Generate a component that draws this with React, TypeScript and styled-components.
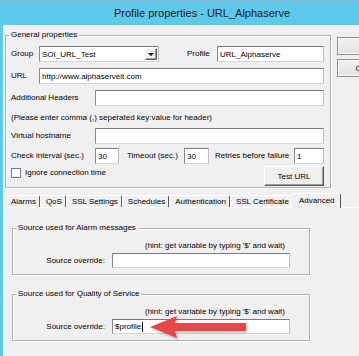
import React from "react";
import styled, { createGlobalStyle } from "styled-components";

const GlobalStyle = createGlobalStyle`
  html, body {
    margin: 0;
    padding: 0;
    background: #f0f0f0;
  }
  body {
    font-family: "Liberation Sans", Arial, sans-serif;
    font-size: 8px;
    color: #000;
  }
`;

const Window = styled.div`
  width: 359px;
  height: 356px;
  overflow: hidden;
  display: flex;
  flex-direction: column;
  background: #f0f0f0;
`;

const TitleBar = styled.div`
  flex: 0 0 auto;
  height: 25px;
  box-sizing: border-box;
  background: #5fc9ec;
  border-top: 1px solid #8fb8c8;
  padding-left: 114px;
  display: flex;
  align-items: center;
  font-size: 11px;
  color: #1b1b1b;
  white-space: nowrap;
`;

const Body = styled.div`
  flex: 1;
  border-left: 3px solid #5fc9ec;
  padding: 5px 0 0 2px;
  display: flex;
  flex-direction: column;
  min-height: 0;
`;

const TopRow = styled.div`
  display: flex;
  align-items: flex-start;
`;

const GroupBox = styled.fieldset<{ $w: number }>`
  margin: 0;
  flex: 0 0 auto;
  width: ${(p) => p.$w}px;
  box-sizing: border-box;
  min-width: 0;
  border: 1px solid #b2b2b2;
  box-shadow: inset 1px 1px 0 #fff, 1px 1px 0 #fff;
  padding: 0 6px 1px 5px;
  display: flex;
  flex-direction: column;

  & + & {
    margin-top: 14px;
  }
`;

const PanelGroup = styled(GroupBox)`
  padding: 0 19px 6px 5px;
`;

const Legend = styled.legend`
  padding: 0 2px;
  margin-left: -2px;
  line-height: 10px;
  background: #f0f0f0;
`;

const Row = styled.div<{ $mt?: number; $h?: number }>`
  display: flex;
  align-items: center;
  margin-top: ${(p) => p.$mt ?? 0}px;
  height: ${(p) => p.$h ?? 16}px;
`;

const Label = styled.span<{ $w?: number; $ml?: number }>`
  flex: 0 0 ${(p) => (p.$w ? `${p.$w}px` : "auto")};
  margin-left: ${(p) => p.$ml ?? 0}px;
  white-space: nowrap;
  line-height: 10px;
`;

const Note = styled.div<{ $mt?: number }>`
  margin-top: ${(p) => p.$mt ?? 0}px;
  line-height: 10px;
  white-space: nowrap;
`;

const TextBox = styled.div<{ $w?: number; $h?: number }>`
  box-sizing: border-box;
  ${(p) => (p.$w ? `flex: 0 0 ${p.$w}px;` : "flex: 1; min-width: 0;")}
  height: ${(p) => p.$h ?? 16}px;
  background: #fff;
  border: 1px solid;
  border-color: #7a7a7a #bdbdbd #d4d4d4 #8a8a8a;
  padding: 0 2px;
  display: flex;
  align-items: center;
  white-space: nowrap;
  position: relative;
`;

const Caret = styled.span`
  display: inline-block;
  width: 1px;
  height: 10px;
  background: #000;
  margin-left: 1px;
`;

const SelectBox = styled(TextBox)`
  padding-right: 1px;
  justify-content: space-between;
`;

const DropButton = styled.span`
  width: 12px;
  height: 12px;
  box-sizing: border-box;
  background: #f0f0f0;
  border: 1px solid;
  border-color: #fff #5a5a5a #5a5a5a #fff;
  box-shadow: inset -1px -1px 0 #a0a0a0;
  display: flex;
  align-items: center;
  justify-content: center;

  &::after {
    content: "";
    border-left: 3px solid transparent;
    border-right: 3px solid transparent;
    border-top: 3px solid #000;
    margin-top: 1px;
  }
`;

const CheckRow = styled.label`
  display: flex;
  align-items: center;
  gap: 4px;
  margin-top: 2px;
  line-height: 10px;
  white-space: nowrap;
`;

const CheckBox = styled.span`
  width: 10px;
  height: 10px;
  box-sizing: border-box;
  background: #fff;
  border: 1px solid #7a7a7a;
`;

const LastRow = styled.div`
  display: flex;
  justify-content: space-between;
  align-items: flex-start;
  margin-top: 2px;
  height: 20px;
`;

const ClassicButton = styled.div<{ $w: number }>`
  width: ${(p) => p.$w}px;
  height: 20px;
  box-sizing: border-box;
  border: 1px solid;
  border-color: #fff #5a5a5a #5a5a5a #fff;
  box-shadow: inset -1px -1px 0 #a0a0a0;
  background: #f0f0f0;
  display: flex;
  align-items: center;
  justify-content: center;
  white-space: nowrap;
`;

const ButtonCol = styled.div`
  flex: 0 0 auto;
  margin: 7px 0 0 6px;
  display: flex;
  flex-direction: column;
  gap: 4px;
`;

const DialogButton = styled.div`
  width: 62px;
  height: 18px;
  box-sizing: border-box;
  border: 1px solid #8f8f8f;
  box-shadow: inset 0 0 0 1px #fbfbfb;
  background: linear-gradient(#f2f2f2, #e3e3e3);
  display: flex;
  align-items: center;
  justify-content: center;
`;

const TabStrip = styled.div`
  display: flex;
  align-items: flex-end;
  height: 14px;
  margin-top: 5px;
  position: relative;
  z-index: 1;
`;

const Tab = styled.div<{ $active?: boolean }>`
  flex: 0 0 auto;
  height: ${(p) => (p.$active ? 15 : 12)}px;
  margin: 0 ${(p) => (p.$active ? -2 : 0)}px ${(p) => (p.$active ? -1 : 0)}px;
  box-sizing: border-box;
  padding: ${(p) => (p.$active ? "0 5px 1px 7px" : "0 3px 0 5px")};
  border-top: 1px solid #fff;
  border-left: 1px solid #fff;
  border-right: 1px solid #5a5a5a;
  border-radius: 2px 2px 0 0;
  background: #f0f0f0;
  display: flex;
  align-items: center;
  white-space: nowrap;
  position: relative;
  z-index: ${(p) => (p.$active ? 2 : 1)};
`;

const TabPanel = styled.div`
  flex: 1;
  border-top: 1px solid #fff;
  border-left: 1px solid #fff;
  padding: 15px 0 0 6px;
  display: flex;
  flex-direction: column;
`;

const Hint = styled.div`
  margin-top: 8px;
  line-height: 10px;
  text-align: right;
  padding-right: 5px;
  white-space: nowrap;
`;

const SourceLabel = styled.span`
  flex: 1;
  text-align: right;
  padding-right: 7px;
  white-space: nowrap;
  line-height: 10px;
`;

const Arrow = styled.svg`
  position: absolute;
  left: 37px;
  top: -5px;
  overflow: visible;
`;

const tabs = [
  "Alarms",
  "QoS",
  "SSL Settings",
  "Schedules",
  "Authentication",
  "SSL Certificate",
  "Advanced",
];

function SourceGroup({ title, value }: { title: string; value?: string }) {
  return (
    <PanelGroup $w={298}>
      <Legend>{title}</Legend>
      <Hint>(hint: get variable by typing '$' and wait)</Hint>
      <Row $mt={2} $h={15}>
        <SourceLabel>Source override:</SourceLabel>
        <TextBox $w={178} $h={15}>
          {value && (
            <>
              {value}
              <Caret />
              <Arrow width="97" height="24" viewBox="0 0 97 24">
                <defs>
                  <filter id="sh" x="-10%" y="-30%" width="130%" height="170%">
                    <feDropShadow dx="1" dy="1.5" stdDeviation="1" floodColor="#000" floodOpacity="0.3" />
                  </filter>
                </defs>
                <polygon
                  points="0,12 27,1 25,8 96,8 96,16 25,16 27,23"
                  fill="#e8474a"
                  filter="url(#sh)"
                />
              </Arrow>
            </>
          )}
        </TextBox>
      </Row>
    </PanelGroup>
  );
}

function App() {
  return (
    <Window>
      <GlobalStyle />
      <TitleBar>Profile properties - URL_Alphaserve</TitleBar>
      <Body>
        <TopRow>
          <GroupBox $w={326}>
            <Legend>General properties</Legend>
            <Row $mt={6}>
              <Label $w={28}>Group</Label>
              <SelectBox $w={120}>
                SOI_URL_Test
                <DropButton />
              </SelectBox>
              <Label $w={30} $ml={28}>
                Profile
              </Label>
              <TextBox>URL_Alphaserve</TextBox>
            </Row>
            <Row $mt={6}>
              <Label $w={28}>URL</Label>
              <TextBox>http://www.alphaserveit.com</TextBox>
            </Row>
            <Row $mt={6}>
              <Label $w={84}>Additional Headers</Label>
              <TextBox />
            </Row>
            <Note $mt={7}>
              (Please enter comma (,) seperated key:value for header)
            </Note>
            <Row $mt={5}>
              <Label $w={84}>Virtual hostname</Label>
              <TextBox />
            </Row>
            <Row $mt={4}>
              <Label $w={84}>Check interval (sec.)</Label>
              <TextBox $w={24}>30</TextBox>
              <Label $w={57} $ml={8}>
                Timeout (sec.)
              </Label>
              <TextBox $w={25}>30</TextBox>
              <Label $w={79} $ml={6}>
                Retries before failure
              </Label>
              <TextBox>1</TextBox>
            </Row>
            <LastRow>
              <CheckRow>
                <CheckBox />
                Ignore connection time
              </CheckRow>
              <ClassicButton $w={60}>Test URL</ClassicButton>
            </LastRow>
          </GroupBox>
          <ButtonCol>
            <DialogButton>OK</DialogButton>
            <DialogButton>Cancel</DialogButton>
          </ButtonCol>
        </TopRow>
        <TabStrip>
          {tabs.map((t) => (
            <Tab key={t} $active={t === "Advanced"}>
              {t}
            </Tab>
          ))}
        </TabStrip>
        <TabPanel>
          <SourceGroup title="Source used for Alarm messages" />
          <SourceGroup title="Source used for Quality of Service" value="$profile" />
        </TabPanel>
      </Body>
    </Window>
  );
}

export default App;
